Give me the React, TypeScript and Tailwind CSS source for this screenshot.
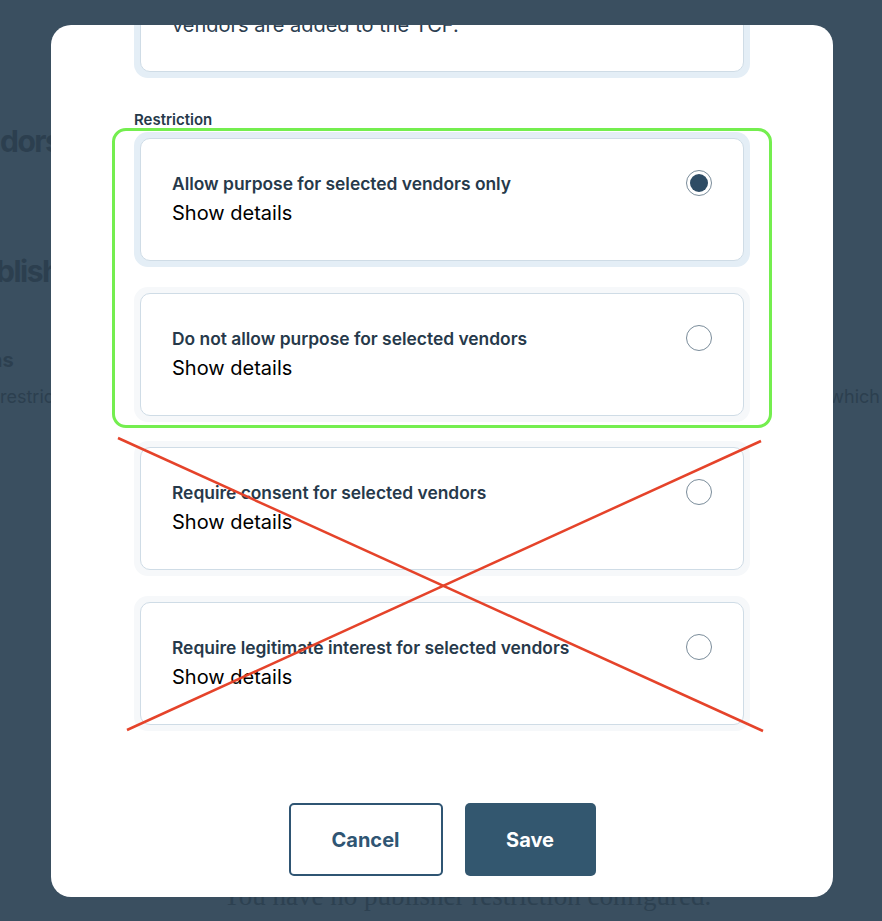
import React from "react";

type Option = {
  title: string;
  selected?: boolean;
};

const options: Option[] = [
  { title: "Allow purpose for selected vendors only", selected: true },
  { title: "Do not allow purpose for selected vendors" },
  { title: "Require consent for selected vendors" },
  { title: "Require legitimate interest for selected vendors" },
];

const Radio = ({ checked }: { checked?: boolean }) => (
  <span className="mt-[-2px] flex h-[26px] w-[26px] shrink-0 items-center justify-center rounded-full border-[1.5px] border-[#7a8c9a] bg-white">
    {checked && <span className="h-[18px] w-[18px] rounded-full bg-[#2e4c65]" />}
  </span>
);

const OptionCard = ({ option }: { option: Option }) => (
  <div
    className={
      option.selected
        ? "rounded-[14px] bg-[#e4eef6] p-[6px]"
        : "rounded-[14px] bg-[#f6f8fa] p-[6px]"
    }
  >
    <div className="flex items-start justify-between rounded-[10px] border border-[#cfdce6] bg-white pt-[33px] pb-[33px] pl-[31px] pr-[31px]">
      <div>
        <p className="text-[17.4px] leading-[24px] font-semibold text-[#26394a]">
          {option.title}
        </p>
        <p className="mt-[3px] text-[20px] leading-[28px] text-black">Show details</p>
      </div>
      <Radio checked={option.selected} />
    </div>
  </div>
);

const App = () => {
  return (
    <div className="relative h-[921px] overflow-hidden bg-[#3a4f60] font-['Inter',sans-serif]">
      {/* page behind the overlay */}
      <div className="text-[#2c3f4f]">
        <p className="pt-[122px] text-[30px] leading-[38px] font-bold tracking-tighter">dors</p>
        <p className="mt-[92px] -ml-[4px] text-[30px] leading-[38px] font-bold tracking-tighter">blish</p>
        <p className="mt-[57px] -ml-[10px] text-[20px] leading-[26px] font-bold">ns</p>
        <div className="mt-[12px] flex justify-between text-[18px] leading-[24px]">
          <span>restrict</span>
          <span className="pr-[2px]">which</span>
        </div>
        <p className="mt-[471px] pl-[222px] font-['Liberation_Serif',serif] text-[27px] leading-[32px] text-[#2d4151]">
          You have no publisher restriction configured.
        </p>
      </div>

      {/* modal */}
      <div className="absolute top-[25px] left-[51px] flex h-[872px] w-[782px] flex-col overflow-hidden rounded-[20px] bg-white px-[83px]">
        <div className="-mt-[69px] rounded-[14px] bg-[#e4eef6] p-[6px]">
          <div className="rounded-[10px] border border-[#cfdce6] bg-white pt-[20px] pb-[32px] pl-[31px] text-[20px] leading-[28px] text-[#2c3e50]">
            <p>Each restriction applies to all selected vendors, and to new</p>
            <p>vendors are added to the TCF.</p>
          </div>
        </div>

        <p className="mt-[33px] text-[15px] leading-[17px] font-semibold text-[#26394a]">
          Restriction
        </p>

        <div className="-mx-[22px] flex flex-col gap-[20px] rounded-[14px] border-[3px] border-[#74ee4f] px-[19px] pt-[1px] pb-[3px]">
          <OptionCard option={options[0]} />
          <OptionCard option={options[1]} />
        </div>

        <div className="mt-[13px] flex flex-col gap-[20px]">
          <OptionCard option={options[2]} />
          <OptionCard option={options[3]} />
        </div>

        <div className="mt-[72px] flex justify-center gap-[22px]">
          <button className="h-[73px] w-[154px] rounded-[5px] border-2 border-[#2f5573] bg-white text-[20px] font-bold text-[#2f5573]">
            Cancel
          </button>
          <button className="h-[73px] w-[131px] rounded-[5px] bg-[#33576f] text-[20px] font-bold text-white">
            Save
          </button>
        </div>
      </div>

      {/* red cross drawn over the two last options */}
      <svg
        className="pointer-events-none absolute top-0 left-0"
        width="882"
        height="921"
        viewBox="0 0 882 921"
      >
        <line x1="118" y1="438" x2="763" y2="731" stroke="#e5432a" strokeWidth="2.5" />
        <line x1="761" y1="441" x2="127" y2="730" stroke="#e5432a" strokeWidth="2.5" />
      </svg>
    </div>
  );
};

export default App;
